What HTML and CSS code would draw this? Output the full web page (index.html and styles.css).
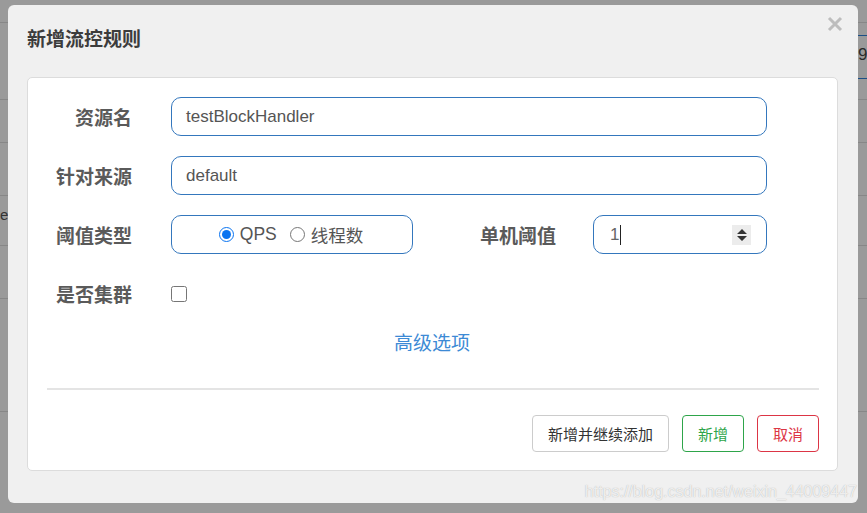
FILE: index.html
```html
<!DOCTYPE html>
<html lang="zh">
<head>
<meta charset="utf-8">
<title>新增流控规则</title>
<link rel="stylesheet" href="styles.css">
</head>
<body>
<div class="backdrop">
  <div class="bg-row r1"></div>
  <div class="bg-row r2"><span class="bg-right-text">9</span></div>
  <div class="bg-row r3"></div>
  <div class="bg-row r4"></div>
  <div class="bg-row r5"><span class="bg-left-text">ex</span></div>
  <div class="bg-row r6"></div>
  <div class="bg-row r7"></div>
</div>
<div class="bg-blue-box"></div>

<div class="dialog">
  <div class="dialog-header">
    <h4 class="dialog-title">新增流控规则</h4>
    <span class="close">
      <svg width="16" height="16" viewBox="0 0 16 16"><path d="M2 2 L14 14 M14 2 L2 14" stroke="#bdbdbd" stroke-width="3" stroke-linecap="butt"/></svg>
    </span>
  </div>
  <div class="card">
    <div class="form-row">
      <label class="label">资源名</label>
      <div class="field wide">testBlockHandler</div>
    </div>
    <div class="form-row">
      <label class="label">针对来源</label>
      <div class="field wide">default</div>
    </div>
    <div class="form-row">
      <label class="label">阈值类型</label>
      <div class="field radio-box">
        <label class="radio-item"><input type="radio" name="grade" checked><span>QPS</span></label>
        <label class="radio-item"><input type="radio" name="grade"><span>线程数</span></label>
      </div>
      <label class="label label-2">单机阈值</label>
      <div class="field number">
        <span class="num-val">1</span><span class="caret"></span>
        <span class="spin">
          <svg width="18" height="20" viewBox="0 0 18 20"><path d="M4 9 L9 4 L14 9 Z M4 11 L14 11 L9 16 Z" fill="#333"/></svg>
        </span>
      </div>
    </div>
    <div class="form-row">
      <label class="label">是否集群</label>
      <input type="checkbox" class="check">
    </div>
    <div class="advanced"><a class="adv-link">高级选项</a></div>
    <div class="divider"></div>
    <div class="actions">
      <button class="btn btn-default">新增并继续添加</button>
      <button class="btn btn-success">新增</button>
      <button class="btn btn-danger">取消</button>
    </div>
  </div>
  <div class="watermark">https://blog.csdn.net/weixin_44009447</div>
</div>
</body>
</html>
```
FILE: styles.css
```css
* { box-sizing: border-box; }
html, body { margin: 0; padding: 0; }
body {
  width: 867px;
  height: 513px;
  overflow: hidden;
  background: #9a9a9a;
  font-family: "Liberation Sans", "Noto Sans CJK SC", Arial, sans-serif;
  position: relative;
}
.backdrop { display: flex; flex-direction: column; }
.bg-row { border-bottom: 1px solid #878787; position: relative; }
.r1 { height: 23px; }
.r2 { height: 77px; }
.r3 { height: 43px; }
.r4 { height: 53px; }
.r5 { height: 50px; }
.r6 { height: 53px; }
.r7 { height: 113px; }
.bg-right-text {
  position: absolute; left: 858px; top: 22px;
  font-size: 17px; color: #2a2a2a;
}
.bg-left-text {
  position: absolute; left: 0; top: 10px;
  font-size: 15px; color: #333;
}
.bg-blue-box {
  position: absolute; left: 850px; top: 35px; width: 30px; height: 44px;
  border-top: 1px solid #1d4f86; border-bottom: 1px solid #1d4f86;
}

.dialog {
  position: absolute;
  left: 8px; top: 5px;
  width: 850px; height: 498px;
  background: #f0f0f0;
  border-radius: 6px;
  padding: 0 20px 0 19px;
}
.dialog-header {
  height: 72px;
  display: flex;
  align-items: flex-start;
  justify-content: space-between;
}
.dialog-title {
  margin: 19px 0 0;
  font-family: "Noto Sans CJK SC", sans-serif;
  font-size: 19px;
  font-weight: 700;
  line-height: 28px;
  color: #3c3c3c;
}
.close { margin: 11px -5px 0 0; display: flex; }

.card {
  height: 394px;
  background: #fff;
  border: 1px solid #dcdcdc;
  border-radius: 5px;
  padding: 19px 18px 18px 19px;
}
.form-row {
  display: flex;
  align-items: center;
  height: 39px;
  margin-bottom: 20px;
}
.label {
  width: 85px;
  margin-right: 39px;
  text-align: right;
  font-family: "Noto Sans CJK SC", sans-serif;
  font-size: 19px;
  font-weight: 700;
  color: #5a5a5a;
}
.label-2 { width: 143px; margin-right: 37px; }
.field {
  height: 39px;
  border: 1px solid #3477bd;
  border-radius: 10px;
  display: flex;
  align-items: center;
  padding-left: 14px;
  font-size: 17px;
  color: #555;
}
.wide { width: 596px; }
.radio-box {
  width: 242px;
  justify-content: center;
  padding-left: 0;
  padding-right: 2px;
  gap: 13px;
}
.radio-item {
  display: flex; align-items: center;
  font-family: "Liberation Sans", "Noto Sans CJK SC", sans-serif;
  font-size: 17.5px; color: #555;
}
.radio-item input {
  width: 15px; height: 15px; margin: 0 6px 0 0;
  accent-color: #0a74f0;
}
.number {
  width: 174px;
  padding-left: 16px;
  position: relative;
}
.num-val { color: #666; }
.caret { width: 1px; height: 20px; background: #222; margin-left: 1px; }
.spin {
  margin-left: auto;
  margin-right: 15px;
  width: 19px; height: 20px;
  background: #ececec;
  display: flex; align-items: center; justify-content: center;
}
.check {
  width: 16px; height: 16px; margin: 0;
}
.form-row:nth-child(4) { margin-bottom: 17px; }
.advanced {
  text-align: center;
  height: 24px;
  line-height: 24px;
  padding-right: 2px;
}
.adv-link {
  font-family: "Noto Sans CJK SC", sans-serif;
  font-size: 19px;
  color: #3d8ad5;
}
.divider {
  height: 2px;
  background: #e4e4e4;
  margin-top: 34px;
}
.actions {
  margin-top: 25px;
  display: flex;
  justify-content: flex-end;
  gap: 13px;
}
.btn {
  height: 37px;
  background: #fff;
  border: 1px solid #ccc;
  border-radius: 4px;
  font-family: "Noto Sans CJK SC", sans-serif;
  font-size: 15px;
  color: #333;
  padding: 0;
}
.btn-default { width: 137px; }
.btn-success { width: 62px; border-color: #2ea54a; color: #2ea54a; }
.btn-danger { width: 62px; border-color: #dc3545; color: #dc3545; }

.watermark {
  position: absolute;
  right: 1px; bottom: 2px;
  font-family: "Liberation Sans", Arial, sans-serif;
  font-size: 16px;
  color: rgba(255,255,255,0.8);
  text-shadow: 0 0 1px rgba(120,120,120,0.6);
  white-space: nowrap;
}
```
